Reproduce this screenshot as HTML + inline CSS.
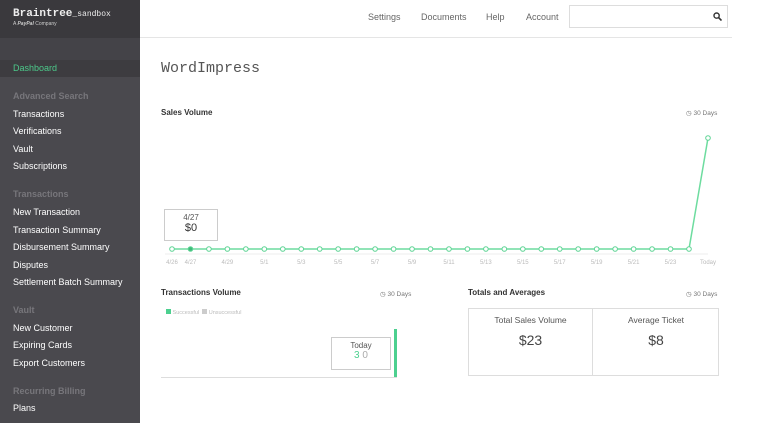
<!DOCTYPE html><html><head><style>
body{margin:0;width:768px;height:423px;overflow:hidden;background:#fff;font-family:"Liberation Sans",sans-serif;position:relative}
#sb{position:absolute;left:0;top:0;width:140px;height:423px;background:#4a494e}
#sbh{position:absolute;left:0;top:0;width:140px;height:38px;background:#3a393d}
#sbh2{position:absolute;left:0;top:38px;width:140px;height:22px;background:#444348}
.it{position:absolute;left:13px;font-size:9px;color:#fff}
.hd{position:absolute;left:13px;font-size:9px;color:#77767b;font-weight:bold}
.nav{position:absolute;top:12px;font-size:9px;color:#666}
.t{position:absolute;font-size:8px;font-weight:bold;color:#333}
.d{position:absolute;font-size:6.5px;color:#777}
</style></head><body>
<div id="sb"></div><div id="sbh"></div><div id="sbh2"></div>
<div style="position:absolute;left:0;top:60px;width:140px;height:17px;background:#3d3c40"></div>
<div style="position:absolute;left:13px;top:8px;font-family:'Liberation Mono',monospace;font-size:11px;font-weight:bold;color:#eee">Braintree<span style="font-size:8px;font-weight:normal">_sandbox</span></div>
<div style="position:absolute;left:13px;top:21px;font-size:5px;color:#ccc">A <b><i>PayPal</i></b> Company</div>
<div class="it" style="top:63px;color:#4cc98a">Dashboard</div>
<div class="hd" style="top:91px">Advanced Search</div>
<div class="it" style="top:109px">Transactions</div>
<div class="it" style="top:126px">Verifications</div>
<div class="it" style="top:144px">Vault</div>
<div class="it" style="top:161px">Subscriptions</div>
<div class="hd" style="top:189px">Transactions</div>
<div class="it" style="top:207px">New Transaction</div>
<div class="it" style="top:225px">Transaction Summary</div>
<div class="it" style="top:242px">Disbursement Summary</div>
<div class="it" style="top:260px">Disputes</div>
<div class="it" style="top:277px">Settlement Batch Summary</div>
<div class="hd" style="top:305px">Vault</div>
<div class="it" style="top:323px">New Customer</div>
<div class="it" style="top:340px">Expiring Cards</div>
<div class="it" style="top:358px">Export Customers</div>
<div class="hd" style="top:386px">Recurring Billing</div>
<div class="it" style="top:403px">Plans</div>
<div class="nav" style="left:368px">Settings</div>
<div class="nav" style="left:421px">Documents</div>
<div class="nav" style="left:486px">Help</div>
<div class="nav" style="left:526px">Account</div>
<div style="position:absolute;left:569px;top:5px;width:159px;height:23px;border:1px solid #ddd;box-sizing:border-box"></div>
<svg style="position:absolute;left:713px;top:12px" width="9" height="9"><circle cx="3.6" cy="3.6" r="2.6" fill="none" stroke="#333" stroke-width="1.4"/><line x1="5.5" y1="5.5" x2="8.5" y2="8.5" stroke="#333" stroke-width="1.6"/></svg>
<div style="position:absolute;left:140px;top:37px;width:592px;height:1px;background:#e5e5e5"></div>
<div style="position:absolute;left:161px;top:60px;font-family:'Liberation Mono',monospace;font-size:15px;color:#555">WordImpress</div>
<div class="t" style="left:161px;top:108px">Sales Volume</div>
<div class="d" style="left:686px;top:109px">◷ 30 Days</div>
<svg style="position:absolute;left:0;top:0" width="768" height="423" id="ch"></svg>
<div style="position:absolute;left:164px;top:209px;width:52px;height:30px;border:1px solid #ccc;background:#fff;text-align:center;font-size:8px;color:#555"><div style="margin-top:3px">4/27</div><div style="font-size:11px;color:#333">$0</div></div>
<div class="t" style="left:161px;top:288px">Transactions Volume</div>
<div class="d" style="left:380px;top:290px">◷ 30 Days</div>
<div style="position:absolute;left:166px;top:309px;font-size:5.5px;color:#bbb"><span style="display:inline-block;width:5px;height:5px;background:#4cd08f"></span> Successful &nbsp;<span style="display:inline-block;width:5px;height:5px;background:#ccc"></span> Unsuccessful</div>
<div style="position:absolute;left:394px;top:329px;width:3px;height:48px;background:#4cd08f"></div>
<div style="position:absolute;left:161px;top:377px;width:236px;height:1px;background:#ddd"></div>
<div style="position:absolute;left:331px;top:337px;width:58px;height:31px;border:1px solid #ccc;background:#fff;text-align:center;font-size:8px;color:#555"><div style="margin-top:3px">Today</div><div style="font-size:10px"><span style="color:#4cd08f">3</span> <span style="color:#aaa">0</span></div></div>
<div class="t" style="left:468px;top:288px">Totals and Averages</div>
<div class="d" style="left:686px;top:290px">◷ 30 Days</div>
<div style="position:absolute;left:468px;top:308px;width:251px;height:68px;border:1px solid #ddd;box-sizing:border-box"></div>
<div style="position:absolute;left:592px;top:308px;width:1px;height:68px;background:#ddd"></div>
<div style="position:absolute;left:468px;top:315px;width:125px;text-align:center;font-size:8.5px;color:#555">Total Sales Volume<div style="font-size:14px;color:#444;margin-top:7px">$23</div></div>
<div style="position:absolute;left:593px;top:315px;width:126px;text-align:center;font-size:8.5px;color:#555">Average Ticket<div style="font-size:14px;color:#444;margin-top:7px">$8</div></div>
<script>
var s='<line x1="165" y1="254" x2="708" y2="254" stroke="#eee"/>';var pts=[];
for(var i=0;i<29;i++)pts.push([172+i*18.464,249]);pts.push([708,138]);
s+='<polyline fill="none" stroke="#6ddc9f" stroke-width="1.5" points="'+pts.map(p=>p.join(',')).join(' ')+'"/>';
pts.forEach((p,i)=>{s+='<circle cx="'+p[0]+'" cy="'+p[1]+'" r="2.3" fill="'+(i==1?'#3fba7a':'#fff')+'" stroke="#5fd495" stroke-width="1"/>'});
var lb=['4/26','4/27','4/29','5/1','5/3','5/5','5/7','5/9','5/11','5/13','5/15','5/17','5/19','5/21','5/23'];
var idx=[0,1,3,5,7,9,11,13,15,17,19,21,23,25,27];
idx.forEach((k,j)=>{s+='<text x="'+(172+k*18.464)+'" y="264" font-size="6" fill="#bbb" text-anchor="middle" font-family="Liberation Sans">'+lb[j]+'</text>'});
s+='<text x="708" y="264" font-size="6" fill="#bbb" text-anchor="middle" font-family="Liberation Sans">Today</text>';
document.getElementById('ch').innerHTML=s;
</script>
</body></html>
